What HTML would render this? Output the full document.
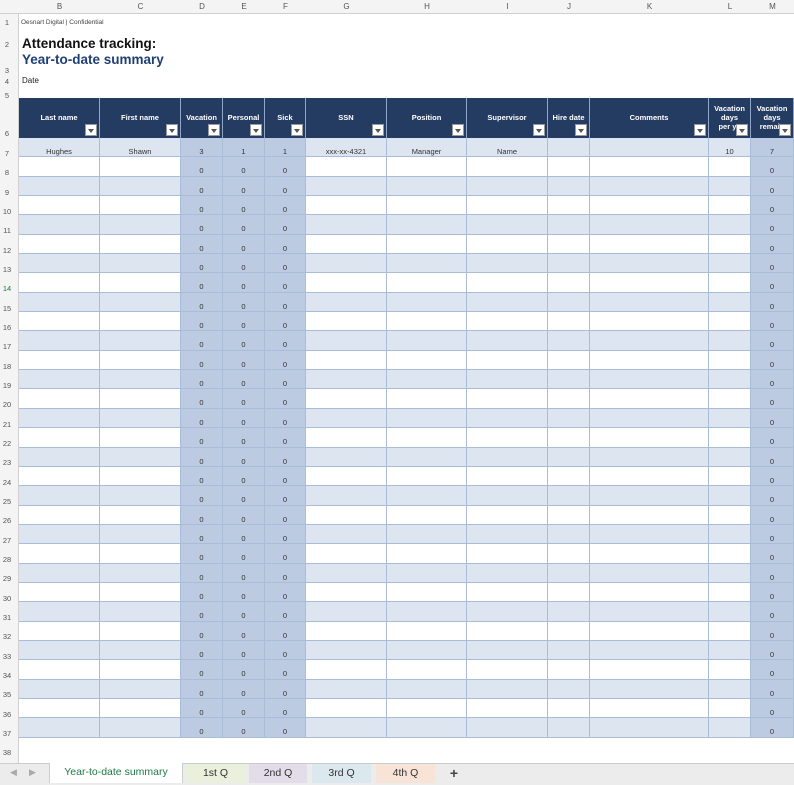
<!DOCTYPE html>
<html><head><meta charset="utf-8"><style>
*{box-sizing:border-box;margin:0;padding:0}
body{width:794px;height:785px;overflow:hidden;background:#fff;font-family:"Liberation Sans",Arial,sans-serif;position:relative}
.ch{position:absolute;top:0;left:0;width:794px;height:14px;background:#f4f4f4;border-bottom:1px solid #d0d0d0}
.ch span{position:absolute;top:2px;font-size:8px;color:#555;text-align:center}
.rh{position:absolute;left:0;top:14px;width:19px;height:749px;background:#f4f4f4;border-right:1px solid #d0d0d0}
.rh span{position:absolute;left:0;width:14px;text-align:center;font-size:7.5px;color:#555}
.t{position:absolute;left:19px;top:98px;width:775px}
.row{display:flex;height:19.35px}
.row>div{border-right:1px solid #a9bcd8;border-bottom:1px solid #a9bcd8;font-size:7.5px;color:#333;text-align:center;padding-top:10px;line-height:8px;height:100%}
.row.w>div{background:#fff}.row.s>div{background:#dde5f0}
.row>div:nth-child(3),.row>div:nth-child(4),.row>div:nth-child(5),.row>div:nth-child(12){background:#bccbe2 !important}
.c1{width:81px}.c2{width:81px}.c3{width:42px}.c4{width:42px}.c5{width:41px}.c6{width:81px}.c7{width:80px}.c8{width:81px}.c9{width:42px}.c10{width:119px}.c11{width:42px}.c12{width:43px}
.hd{display:flex;height:40px}
.hd>div{background:#243b62;border-right:1px solid #8fa6c8;color:#fff;font-weight:bold;font-size:7.5px;text-align:center;position:relative;line-height:9px;padding-top:15px;height:40px}
.hd>div.m{padding-top:6px}
.hd>div i{position:absolute;right:2px;bottom:2px;width:12px;height:12px;background:#fff;border:1px solid #999}
.hd>div i:after{content:"";position:absolute;left:2px;top:4px;border-left:3.5px solid transparent;border-right:3.5px solid transparent;border-top:4px solid #555}
.tabs{position:absolute;left:0;top:763px;width:794px;height:22px;background:#ececec;border-top:1px solid #ccc}
.tab{position:absolute;top:0;height:19px;font-size:10.5px;text-align:center;line-height:19px;color:#333}
</style></head><body>
<div class="ch">
<span style="left:19px;width:81px">B</span><span style="left:100px;width:81px">C</span><span style="left:181px;width:42px">D</span><span style="left:223px;width:42px">E</span><span style="left:265px;width:41px">F</span><span style="left:306px;width:81px">G</span><span style="left:387px;width:80px">H</span><span style="left:467px;width:81px">I</span><span style="left:548px;width:42px">J</span><span style="left:590px;width:119px">K</span><span style="left:709px;width:42px">L</span><span style="left:751px;width:43px">M</span>
</div>
<div class="rh">
<span style="top:4px">1</span><span style="top:26px">2</span><span style="top:52px">3</span><span style="top:63px">4</span><span style="top:77px">5</span><span style="top:115px">6</span>
<span style="top:135px">7</span><span style="top:154px">8</span><span style="top:174px">9</span><span style="top:193px">10</span><span style="top:212px">11</span><span style="top:232px">12</span><span style="top:251px">13</span><span style="top:270px;color:#1a7a3a">14</span><span style="top:290px">15</span><span style="top:309px">16</span><span style="top:328px">17</span><span style="top:348px">18</span><span style="top:367px">19</span><span style="top:386px">20</span><span style="top:406px">21</span><span style="top:425px">22</span><span style="top:444px">23</span><span style="top:464px">24</span><span style="top:483px">25</span><span style="top:502px">26</span><span style="top:522px">27</span><span style="top:541px">28</span><span style="top:560px">29</span><span style="top:580px">30</span><span style="top:599px">31</span><span style="top:618px">32</span><span style="top:638px">33</span><span style="top:657px">34</span><span style="top:676px">35</span><span style="top:696px">36</span><span style="top:715px">37</span><span style="top:734px">38</span>
</div>
<div style="position:absolute;left:21px;top:19px;font-size:6.5px;color:#444">Oesnart Digital | Confidential</div>
<div style="position:absolute;left:22px;top:36px;font-size:13.5px;font-weight:bold;color:#111">Attendance tracking:</div>
<div style="position:absolute;left:22px;top:52px;font-size:13.5px;font-weight:bold;color:#1f3f75">Year-to-date summary</div>
<div style="position:absolute;left:22px;top:76px;font-size:8px;color:#222">Date</div>
<div class="t">
<div class="hd">
<div class="c1">Last name<i></i></div><div class="c2">First name<i></i></div><div class="c3">Vacation<i></i></div><div class="c4">Personal<i></i></div><div class="c5">Sick<i></i></div><div class="c6">SSN<i></i></div><div class="c7">Position<i></i></div><div class="c8">Supervisor<i></i></div><div class="c9">Hire date<i></i></div><div class="c10">Comments<i></i></div><div class="c11 m">Vacation<br>days<br>per ye<i></i></div><div class="c12 m">Vacation<br>days<br>remain<i></i></div>
</div>
<div class="row s"><div class="c1">Hughes</div><div class="c2">Shawn</div><div class="c3">3</div><div class="c4">1</div><div class="c5">1</div><div class="c6">xxx-xx-4321</div><div class="c7">Manager</div><div class="c8">Name</div><div class="c9"></div><div class="c10"></div><div class="c11">10</div><div class="c12">7</div></div>
<div class="row w"><div class="c1"></div><div class="c2"></div><div class="c3">0</div><div class="c4">0</div><div class="c5">0</div><div class="c6"></div><div class="c7"></div><div class="c8"></div><div class="c9"></div><div class="c10"></div><div class="c11"></div><div class="c12">0</div></div>
<div class="row s"><div class="c1"></div><div class="c2"></div><div class="c3">0</div><div class="c4">0</div><div class="c5">0</div><div class="c6"></div><div class="c7"></div><div class="c8"></div><div class="c9"></div><div class="c10"></div><div class="c11"></div><div class="c12">0</div></div>
<div class="row w"><div class="c1"></div><div class="c2"></div><div class="c3">0</div><div class="c4">0</div><div class="c5">0</div><div class="c6"></div><div class="c7"></div><div class="c8"></div><div class="c9"></div><div class="c10"></div><div class="c11"></div><div class="c12">0</div></div>
<div class="row s"><div class="c1"></div><div class="c2"></div><div class="c3">0</div><div class="c4">0</div><div class="c5">0</div><div class="c6"></div><div class="c7"></div><div class="c8"></div><div class="c9"></div><div class="c10"></div><div class="c11"></div><div class="c12">0</div></div>
<div class="row w"><div class="c1"></div><div class="c2"></div><div class="c3">0</div><div class="c4">0</div><div class="c5">0</div><div class="c6"></div><div class="c7"></div><div class="c8"></div><div class="c9"></div><div class="c10"></div><div class="c11"></div><div class="c12">0</div></div>
<div class="row s"><div class="c1"></div><div class="c2"></div><div class="c3">0</div><div class="c4">0</div><div class="c5">0</div><div class="c6"></div><div class="c7"></div><div class="c8"></div><div class="c9"></div><div class="c10"></div><div class="c11"></div><div class="c12">0</div></div>
<div class="row w"><div class="c1"></div><div class="c2"></div><div class="c3">0</div><div class="c4">0</div><div class="c5">0</div><div class="c6"></div><div class="c7"></div><div class="c8"></div><div class="c9"></div><div class="c10"></div><div class="c11"></div><div class="c12">0</div></div>
<div class="row s"><div class="c1"></div><div class="c2"></div><div class="c3">0</div><div class="c4">0</div><div class="c5">0</div><div class="c6"></div><div class="c7"></div><div class="c8"></div><div class="c9"></div><div class="c10"></div><div class="c11"></div><div class="c12">0</div></div>
<div class="row w"><div class="c1"></div><div class="c2"></div><div class="c3">0</div><div class="c4">0</div><div class="c5">0</div><div class="c6"></div><div class="c7"></div><div class="c8"></div><div class="c9"></div><div class="c10"></div><div class="c11"></div><div class="c12">0</div></div>
<div class="row s"><div class="c1"></div><div class="c2"></div><div class="c3">0</div><div class="c4">0</div><div class="c5">0</div><div class="c6"></div><div class="c7"></div><div class="c8"></div><div class="c9"></div><div class="c10"></div><div class="c11"></div><div class="c12">0</div></div>
<div class="row w"><div class="c1"></div><div class="c2"></div><div class="c3">0</div><div class="c4">0</div><div class="c5">0</div><div class="c6"></div><div class="c7"></div><div class="c8"></div><div class="c9"></div><div class="c10"></div><div class="c11"></div><div class="c12">0</div></div>
<div class="row s"><div class="c1"></div><div class="c2"></div><div class="c3">0</div><div class="c4">0</div><div class="c5">0</div><div class="c6"></div><div class="c7"></div><div class="c8"></div><div class="c9"></div><div class="c10"></div><div class="c11"></div><div class="c12">0</div></div>
<div class="row w"><div class="c1"></div><div class="c2"></div><div class="c3">0</div><div class="c4">0</div><div class="c5">0</div><div class="c6"></div><div class="c7"></div><div class="c8"></div><div class="c9"></div><div class="c10"></div><div class="c11"></div><div class="c12">0</div></div>
<div class="row s"><div class="c1"></div><div class="c2"></div><div class="c3">0</div><div class="c4">0</div><div class="c5">0</div><div class="c6"></div><div class="c7"></div><div class="c8"></div><div class="c9"></div><div class="c10"></div><div class="c11"></div><div class="c12">0</div></div>
<div class="row w"><div class="c1"></div><div class="c2"></div><div class="c3">0</div><div class="c4">0</div><div class="c5">0</div><div class="c6"></div><div class="c7"></div><div class="c8"></div><div class="c9"></div><div class="c10"></div><div class="c11"></div><div class="c12">0</div></div>
<div class="row s"><div class="c1"></div><div class="c2"></div><div class="c3">0</div><div class="c4">0</div><div class="c5">0</div><div class="c6"></div><div class="c7"></div><div class="c8"></div><div class="c9"></div><div class="c10"></div><div class="c11"></div><div class="c12">0</div></div>
<div class="row w"><div class="c1"></div><div class="c2"></div><div class="c3">0</div><div class="c4">0</div><div class="c5">0</div><div class="c6"></div><div class="c7"></div><div class="c8"></div><div class="c9"></div><div class="c10"></div><div class="c11"></div><div class="c12">0</div></div>
<div class="row s"><div class="c1"></div><div class="c2"></div><div class="c3">0</div><div class="c4">0</div><div class="c5">0</div><div class="c6"></div><div class="c7"></div><div class="c8"></div><div class="c9"></div><div class="c10"></div><div class="c11"></div><div class="c12">0</div></div>
<div class="row w"><div class="c1"></div><div class="c2"></div><div class="c3">0</div><div class="c4">0</div><div class="c5">0</div><div class="c6"></div><div class="c7"></div><div class="c8"></div><div class="c9"></div><div class="c10"></div><div class="c11"></div><div class="c12">0</div></div>
<div class="row s"><div class="c1"></div><div class="c2"></div><div class="c3">0</div><div class="c4">0</div><div class="c5">0</div><div class="c6"></div><div class="c7"></div><div class="c8"></div><div class="c9"></div><div class="c10"></div><div class="c11"></div><div class="c12">0</div></div>
<div class="row w"><div class="c1"></div><div class="c2"></div><div class="c3">0</div><div class="c4">0</div><div class="c5">0</div><div class="c6"></div><div class="c7"></div><div class="c8"></div><div class="c9"></div><div class="c10"></div><div class="c11"></div><div class="c12">0</div></div>
<div class="row s"><div class="c1"></div><div class="c2"></div><div class="c3">0</div><div class="c4">0</div><div class="c5">0</div><div class="c6"></div><div class="c7"></div><div class="c8"></div><div class="c9"></div><div class="c10"></div><div class="c11"></div><div class="c12">0</div></div>
<div class="row w"><div class="c1"></div><div class="c2"></div><div class="c3">0</div><div class="c4">0</div><div class="c5">0</div><div class="c6"></div><div class="c7"></div><div class="c8"></div><div class="c9"></div><div class="c10"></div><div class="c11"></div><div class="c12">0</div></div>
<div class="row s"><div class="c1"></div><div class="c2"></div><div class="c3">0</div><div class="c4">0</div><div class="c5">0</div><div class="c6"></div><div class="c7"></div><div class="c8"></div><div class="c9"></div><div class="c10"></div><div class="c11"></div><div class="c12">0</div></div>
<div class="row w"><div class="c1"></div><div class="c2"></div><div class="c3">0</div><div class="c4">0</div><div class="c5">0</div><div class="c6"></div><div class="c7"></div><div class="c8"></div><div class="c9"></div><div class="c10"></div><div class="c11"></div><div class="c12">0</div></div>
<div class="row s"><div class="c1"></div><div class="c2"></div><div class="c3">0</div><div class="c4">0</div><div class="c5">0</div><div class="c6"></div><div class="c7"></div><div class="c8"></div><div class="c9"></div><div class="c10"></div><div class="c11"></div><div class="c12">0</div></div>
<div class="row w"><div class="c1"></div><div class="c2"></div><div class="c3">0</div><div class="c4">0</div><div class="c5">0</div><div class="c6"></div><div class="c7"></div><div class="c8"></div><div class="c9"></div><div class="c10"></div><div class="c11"></div><div class="c12">0</div></div>
<div class="row s"><div class="c1"></div><div class="c2"></div><div class="c3">0</div><div class="c4">0</div><div class="c5">0</div><div class="c6"></div><div class="c7"></div><div class="c8"></div><div class="c9"></div><div class="c10"></div><div class="c11"></div><div class="c12">0</div></div>
<div class="row w"><div class="c1"></div><div class="c2"></div><div class="c3">0</div><div class="c4">0</div><div class="c5">0</div><div class="c6"></div><div class="c7"></div><div class="c8"></div><div class="c9"></div><div class="c10"></div><div class="c11"></div><div class="c12">0</div></div>
<div class="row s"><div class="c1"></div><div class="c2"></div><div class="c3">0</div><div class="c4">0</div><div class="c5">0</div><div class="c6"></div><div class="c7"></div><div class="c8"></div><div class="c9"></div><div class="c10"></div><div class="c11"></div><div class="c12">0</div></div>
</div>
<div class="tabs">
<span style="position:absolute;left:10px;top:3px;font-size:9px;color:#aaa">◀</span><span style="position:absolute;left:29px;top:3px;font-size:9px;color:#aaa">▶</span>
<div class="tab" style="left:49px;width:134px;background:#fff;color:#1e7a45;height:20px;top:-1px;border-left:1px solid #ccc;border-right:1px solid #ccc">Year-to-date summary</div>
<div class="tab" style="left:185px;width:61px;background:#e9f0dc">1st Q</div>
<div class="tab" style="left:249px;width:58px;background:#e2dde9">2nd Q</div>
<div class="tab" style="left:312px;width:59px;background:#dbe9ef">3rd Q</div>
<div class="tab" style="left:376px;width:59px;background:#f8e4d6">4th Q</div>
<div class="tab" style="left:440px;width:28px;font-size:14px;font-weight:bold;color:#444">+</div>
</div>
</body></html>
